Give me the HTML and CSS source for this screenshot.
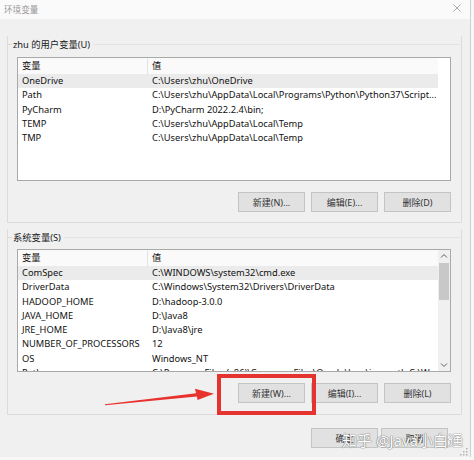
FILE: index.html
```
<!DOCTYPE html>
<html lang="zh-CN">
<head>
    <meta charset="UTF-8">
    <title>环境变量</title>
    <link rel="stylesheet" href="styles.css">
</head>
<body>
    <div class="window">
        <div class="titlebar">
            <span class="title">环境变量</span>
            <svg class="close" width="8" height="8" viewBox="0 0 8 8"><path d="M0.5 0.5L7.5 7.5M7.5 0.5L0.5 7.5" stroke="#a0a0a0" stroke-width="0.9" fill="none"/></svg>
        </div>
        <div class="content">
            <div class="group user-group">
                <div class="group-title">zhu 的用户变量(U)</div>
                <div class="list user-list">
                    <div class="list-body">
                        <div class="row head"><span class="name">变量</span><span class="value">值</span></div>
                        <div class="row selected"><span class="name">OneDrive</span><span class="value">C:\Users\zhu\OneDrive</span></div>
                        <div class="row"><span class="name">Path</span><span class="value">C:\Users\zhu\AppData\Local\Programs\Python\Python37\Script...</span></div>
                        <div class="row"><span class="name">PyCharm</span><span class="value">D:\PyCharm 2022.2.4\bin;</span></div>
                        <div class="row"><span class="name">TEMP</span><span class="value">C:\Users\zhu\AppData\Local\Temp</span></div>
                        <div class="row"><span class="name">TMP</span><span class="value">C:\Users\zhu\AppData\Local\Temp</span></div>
                    </div>
                </div>
                <div class="buttons">
                    <button class="btn">新建(N)...</button>
                    <button class="btn">编辑(E)...</button>
                    <button class="btn">删除(D)</button>
                </div>
            </div>
            <div class="group system-group">
                <div class="group-title">系统变量(S)</div>
                <div class="list system-list">
                    <div class="list-body">
                        <div class="row head"><span class="name">变量</span><span class="value">值</span></div>
                        <div class="row selected"><span class="name">ComSpec</span><span class="value">C:\WINDOWS\system32\cmd.exe</span></div>
                        <div class="row"><span class="name">DriverData</span><span class="value">C:\Windows\System32\Drivers\DriverData</span></div>
                        <div class="row"><span class="name">HADOOP_HOME</span><span class="value">D:\hadoop-3.0.0</span></div>
                        <div class="row"><span class="name">JAVA_HOME</span><span class="value">D:\Java8</span></div>
                        <div class="row"><span class="name">JRE_HOME</span><span class="value">D:\Java8\jre</span></div>
                        <div class="row"><span class="name">NUMBER_OF_PROCESSORS</span><span class="value">12</span></div>
                        <div class="row"><span class="name">OS</span><span class="value">Windows_NT</span></div>
                        <div class="row"><span class="name">Path</span><span class="value">C:\Program Files (x86)\Common Files\Oracle\Java\javapath;C:\W...</span></div>
                    </div>
                    <div class="scrollbar">
                        <svg class="arrow" width="12" height="12" viewBox="0 0 12 12"><path d="M3 7.5L6 4.5L9 7.5" stroke="#606060" stroke-width="1" fill="none"/></svg>
                        <div class="track"><div class="thumb"></div></div>
                        <svg class="arrow" width="12" height="12" viewBox="0 0 12 12"><path d="M3 4.5L6 7.5L9 4.5" stroke="#606060" stroke-width="1" fill="none"/></svg>
                    </div>
                </div>
                <div class="buttons">
                    <button class="btn">新建(W)...</button>
                    <button class="btn">编辑(I)...</button>
                    <button class="btn">删除(L)</button>
                </div>
            </div>
        </div>
        <div class="footer">
            <button class="btn">确定</button>
            <button class="btn">取消</button>
        </div>
        <svg class="grip" width="8" height="8" viewBox="0 0 8 8">
            <rect x="6" y="0" width="1.5" height="1.5" fill="#b0b0b0"/>
            <rect x="3" y="3" width="1.5" height="1.5" fill="#b0b0b0"/>
            <rect x="6" y="3" width="1.5" height="1.5" fill="#b0b0b0"/>
            <rect x="0" y="6" width="1.5" height="1.5" fill="#b0b0b0"/>
            <rect x="3" y="6" width="1.5" height="1.5" fill="#b0b0b0"/>
            <rect x="6" y="6" width="1.5" height="1.5" fill="#b0b0b0"/>
        </svg>

        <!-- annotation drawn on top of the screenshot -->
        <div class="highlight"></div>
        <svg class="pointer" width="474" height="460" viewBox="0 0 474 460">
            <polygon points="105,404.2 196,393.2 195,388.8 214,393.8 197.5,400 197,396.6 105,405.2" fill="#e8322e"/>
        </svg>
        <div class="watermark">知乎 @Java小白通</div>
    </div>
</body>
</html>
```

FILE: styles.css
```
body {
    margin: 0;
    background-color: #f8f8f8;
    font-family: "Noto Sans", "Noto Sans CJK SC", sans-serif;
    font-size: 9.3px;
    color: #111;
}
.window {
    position: relative;
    width: 470px;
    height: 457px;
    background-color: #f0f0f0;
    border-right: 1px solid #cfcfcf;
}
.titlebar {
    display: flex;
    align-items: center;
    justify-content: space-between;
    height: 19px;
    padding: 0 9px 0 4px;
    background-color: #fafafa;
}
.title {
    color: #9a9a9a;
    font-size: 8.6px;
    margin-top: -1px;
}
.close {
    margin-top: -3px;
}
.content {
    padding: 0 8px 0 7px;
}
.group {
    border: 1px solid #dcdcdc;
    border-top: none;
    padding: 0 10px 10px 9px;
}
.user-group {
    margin-top: 17px;
}
.system-group {
    margin-top: 6px;
    padding-bottom: 11px;
}
.group-title {
    display: flex;
    align-items: center;
    height: 16px;
    margin: 0 -11px 0 -10px;
    color: #1a1a1a;
}
.group-title::before {
    content: "";
    width: 5px;
    height: 1px;
    margin-right: 1px;
    background-color: #dcdcdc;
}
.group-title::after {
    content: "";
    flex: 1;
    height: 1px;
    margin-left: 3px;
    background-color: #e4e4e4;
}
.list {
    display: flex;
    border: 1px solid #a9a9a9;
    background-color: #fff;
    overflow: hidden;
}
.user-list {
    margin-top: 5px;
    height: 122px;
}
.system-list {
    margin-top: 4px;
    height: 121px;
}
.list-body {
    width: 420px;
}
.row {
    display: flex;
    height: 14.25px;
    line-height: 14.25px;
    white-space: nowrap;
}
.row.head {
    height: 16px;
    line-height: 16px;
    background-color: #fafafa;
}
.row.selected {
    background-color: #ebebeb;
}
.name {
    width: 130px;
    padding-left: 4px;
    box-sizing: border-box;
}
.head .name {
    border-right: 1px solid #e3e3e3;
}
.value {
    flex: 1;
    padding-left: 4px;
    overflow: hidden;
}
.scrollbar {
    display: flex;
    flex-direction: column;
    width: 12px;
    background-color: #f0f0f0;
}
.arrow {
    display: block;
    flex: none;
}
.track {
    flex: 1;
}
.thumb {
    height: 37px;
    margin: 1px 1px 0 1px;
    background-color: #c8c8c8;
}
.buttons {
    display: flex;
    justify-content: flex-end;
    gap: 6px;
    margin-top: 11px;
}
.btn {
    width: 67px;
    height: 20px;
    padding: 0;
    background-color: #e1e1e1;
    border: 1px solid #c4c4c4;
    font-family: inherit;
    font-size: 9px;
    color: #333;
}
.footer {
    display: flex;
    justify-content: flex-end;
    gap: 3px;
    margin-top: 13px;
    padding-right: 22px;
}
.grip {
    position: absolute;
    right: 2px;
    bottom: 1px;
}
.highlight {
    position: absolute;
    left: 217px;
    top: 374px;
    width: 91px;
    height: 33px;
    border: 4px solid #e5332f;
}
.pointer {
    position: absolute;
    left: 0;
    top: 0;
}
.watermark {
    position: absolute;
    left: 342px;
    top: 429px;
    font-size: 15px;
    color: #fff;
    text-shadow: 0 0 1px #666, 0 0 1px #666;
    white-space: nowrap;
}
```
